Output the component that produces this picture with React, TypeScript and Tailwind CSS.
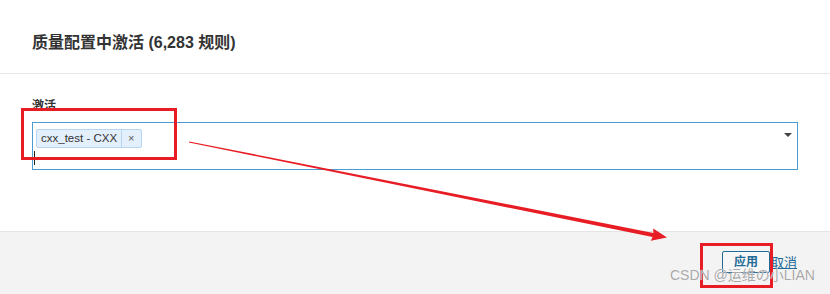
import React from 'react';

const font = { fontFamily: '"Liberation Sans", "Noto Sans CJK SC", Arial, sans-serif' };

function RuleTag({ label }: { label: string }) {
  return (
    <span className="inline-flex items-center h-[19px] bg-[#e3effb] border border-[#b7d6f4] rounded-[2px] text-[11.5px] text-[#333] leading-none">
      <span className="pl-[4px] pr-[4px]">{label}</span>
      <span className="h-full border-l border-[#b7d6f4] px-[6px] flex items-center text-[11px] text-[#555]">×</span>
    </span>
  );
}

export default function App() {
  return (
    <div className="relative w-[830px] h-[294px] bg-white flex flex-col overflow-hidden" style={font}>
      {/* Header */}
      <div className="h-[74px] shrink-0 border-b border-[#e6e6e6] px-8 pt-[33px]">
        <h2 className="text-[16px] leading-[20px] font-bold text-[#333]">质量配置中激活 (6,283 规则)</h2>
      </div>

      {/* Body */}
      <div className="h-[157px] shrink-0 px-8 pt-[24px]">
        <label className="block text-[12px] leading-[16px] font-bold text-[#333] mb-2">激活</label>
        <div className="relative h-[48px] border border-[#4b9cd3] bg-white pl-[3px] pt-[2px]">
          <RuleTag label="cxx_test - CXX" />
          <div className="ml-[-2px] mt-[2px] w-px h-[14px] bg-[#222]" />
          <span className="absolute right-[5px] top-[10px] w-0 h-0 border-l-[4px] border-r-[4px] border-t-[4px] border-l-transparent border-r-transparent border-t-[#444]" />
        </div>
      </div>

      {/* Footer */}
      <div className="flex-1 bg-[#f3f3f3] border-t border-[#e4e4e4] flex items-center justify-end pr-[33px] pb-[2px] gap-[1px]">
        <button className="h-[22px] px-[11px] border border-[#236a97] rounded-[2px] text-[12px] font-bold text-[#236a97] bg-[#f7f7f7] leading-none">应用</button>
        <a className="text-[13px] text-[#236a97] underline leading-none">取消</a>
      </div>

      {/* Annotations */}
      <div className="absolute left-[21px] top-[108px] w-[156px] h-[52px] border-[3px] border-[#e81c24]" />
      <div className="absolute left-[700px] top-[243px] w-[73px] h-[45px] border-[3px] border-[#e81c24]" />
      <svg className="absolute left-0 top-0" width="830" height="294" viewBox="0 0 830 294">
        <polygon
          fill="#e81c24"
          points="189.1,141.4 188.9,142.6 652.6,236.9 650.8,240.8 667,237.6 653.2,228.4 653.4,233"
        />
      </svg>
      <span
        className="absolute left-[670px] top-[268px] text-[14px] text-[#a9a9a9] leading-none whitespace-nowrap"
        style={{ textShadow: '0 0 1px #fff' }}
      >
        CSDN @运维の小LIAN
      </span>
    </div>
  );
}
